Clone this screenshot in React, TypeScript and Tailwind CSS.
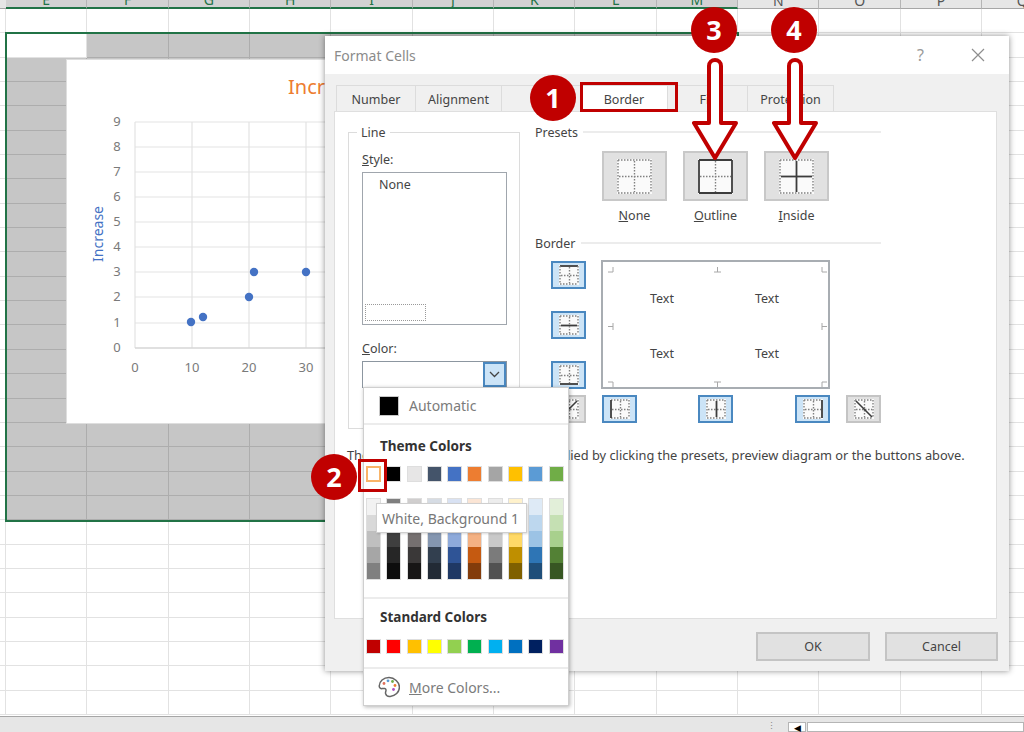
import { ReactNode } from 'react'

const COLUMNS = ['E', 'F', 'G', 'H', 'I', 'J', 'K', 'L', 'M', 'N', 'O', 'P', 'Q']
const ROW_COUNT = 29

const THEME_COLORS = [
  'bg-[#ffffff]', 'bg-[#000000]', 'bg-[#e7e6e6]', 'bg-[#44546a]', 'bg-[#4472c4]',
  'bg-[#ed7d31]', 'bg-[#a5a5a5]', 'bg-[#ffc000]', 'bg-[#5b9bd5]', 'bg-[#70ad47]',
]

const TINTS = [
  ['bg-[#f2f2f2]', 'bg-[#d9d9d9]', 'bg-[#bfbfbf]', 'bg-[#a6a6a6]', 'bg-[#808080]'],
  ['bg-[#7f7f7f]', 'bg-[#595959]', 'bg-[#3f3f3f]', 'bg-[#262626]', 'bg-[#0d0d0d]'],
  ['bg-[#d0cece]', 'bg-[#aeabab]', 'bg-[#757070]', 'bg-[#3a3838]', 'bg-[#171616]'],
  ['bg-[#d6dce4]', 'bg-[#adb9ca]', 'bg-[#8496b0]', 'bg-[#323f4f]', 'bg-[#222a35]'],
  ['bg-[#d9e2f3]', 'bg-[#b4c6e7]', 'bg-[#8eaadb]', 'bg-[#2f5496]', 'bg-[#1f3864]'],
  ['bg-[#fbe5d5]', 'bg-[#f7caac]', 'bg-[#f4b183]', 'bg-[#c55a11]', 'bg-[#833c0b]'],
  ['bg-[#ededed]', 'bg-[#dbdbdb]', 'bg-[#c9c9c9]', 'bg-[#7b7b7b]', 'bg-[#525252]'],
  ['bg-[#fff2cc]', 'bg-[#ffe599]', 'bg-[#ffd966]', 'bg-[#bf8f00]', 'bg-[#7f6000]'],
  ['bg-[#deeaf6]', 'bg-[#bdd7ee]', 'bg-[#9cc3e5]', 'bg-[#2e75b5]', 'bg-[#1f4e79]'],
  ['bg-[#e2efd9]', 'bg-[#c5e0b3]', 'bg-[#a8d08d]', 'bg-[#538135]', 'bg-[#375623]'],
]

const STANDARD_COLORS = [
  'bg-[#c00000]', 'bg-[#ff0000]', 'bg-[#ffc000]', 'bg-[#ffff00]', 'bg-[#92d050]',
  'bg-[#00b050]', 'bg-[#00b0f0]', 'bg-[#0070c0]', 'bg-[#002060]', 'bg-[#7030a0]',
]

type Side = 'top' | 'bottom' | 'left' | 'right' | 'h' | 'v' | 'diag' | 'anti'

// All the border buttons share one glyph: dotted box with the active sides drawn solid.
function BorderGlyph({ size, solid = [] }: { size: number; solid?: Side[] }) {
  const m = Math.floor(size / 2) + 0.5
  const segments: Record<string, [number, number, number, number]> = {
    top: [1, 1, size - 1, 1],
    bottom: [1, size - 1, size - 1, size - 1],
    left: [1, 1, 1, size - 1],
    right: [size - 1, 1, size - 1, size - 1],
    h: [2, m, size - 2, m],
    v: [m, 2, m, size - 2],
  }
  return (
    <svg width={size} height={size} viewBox={`0 0 ${size} ${size}`}>
      <rect x="0" y="0" width={size} height={size} fill="#fafafa" />
      {Object.entries(segments).map(([key, [x1, y1, x2, y2]]) => {
        const on = solid.includes(key as Side)
        return (
          <line
            key={key}
            x1={x1}
            y1={y1}
            x2={x2}
            y2={y2}
            stroke={on ? '#3c3c3c' : '#808080'}
            strokeWidth={on ? 1.8 : 1.4}
            strokeDasharray={on ? undefined : '1.5 1.5'}
          />
        )
      })}
      {solid.includes('diag') && <line x1="2" y1="2" x2={size - 2} y2={size - 2} stroke="#3c3c3c" strokeWidth="1.6" />}
      {solid.includes('anti') && <line x1="2" y1={size - 2} x2={size - 2} y2="2" stroke="#3c3c3c" strokeWidth="1.6" />}
    </svg>
  )
}

function SmallBorderButton({ solid, active = true }: { solid: Side[]; active?: boolean }) {
  return (
    <button
      className={`flex h-[28px] w-[35px] items-center justify-center border-2 ${
        active ? 'border-[#4a88c0] bg-[#cce4f7]' : 'border-[#c4c4c4] bg-[#e1e1e1]'
      }`}
    >
      <BorderGlyph size={20} solid={solid} />
    </button>
  )
}

function PresetButton({ solid, label, hotkey }: { solid: Side[]; label: string; hotkey: string }) {
  return (
    <div className="flex w-[65px] flex-col items-center">
      <button className="flex h-[50px] w-[65px] items-center justify-center border-2 border-[#c8c8c8] bg-[#e1e1e1]">
        <BorderGlyph size={35} solid={solid} />
      </button>
      <span className="mt-[6px] text-[12.5px] leading-[18px] text-[#444]">
        <span className="underline">{hotkey}</span>
        {label}
      </span>
    </div>
  )
}

function SectionHeading({ children }: { children: ReactNode }) {
  return (
    <div className="flex h-[18px] items-center gap-[5px] text-[12.5px] text-[#444]">
      <span>{children}</span>
      <span className="mt-[-2px] h-[2px] flex-1 bg-[#ececec]" />
    </div>
  )
}

function Tab({ label, width, active }: { label: string; width: string; active?: boolean }) {
  return (
    <div
      className={`flex h-[26px] items-center justify-center border-t border-r border-[#dcdcdc] pt-[3px] text-[12.5px] text-[#444] ${width} ${
        active ? 'bg-white' : ''
      }`}
    >
      {label}
    </div>
  )
}

function Sheet() {
  return (
    <div className="flex h-[716px] flex-col overflow-hidden">
      <div className="grid h-[9px] grid-cols-[6px_repeat(13,81.35px)] grid-rows-[9px] overflow-hidden">
        <div className="border-b border-[#a6a6a6] bg-[#e6e6e6]" />
        {COLUMNS.map((col, i) => (
          <div
            key={col}
            className={`flex items-end justify-center border-r border-[#b5b5b5] text-[14px] leading-none ${
              i < 9
                ? 'border-b-2 border-b-[#217346] bg-[#d2d2d2] text-[#217346]'
                : 'border-b border-b-[#a6a6a6] bg-[#e6e6e6] text-[#555]'
            }`}
          >
            {col}
          </div>
        ))}
      </div>
      <div className="grid grid-cols-[6px_repeat(13,81.35px)] auto-rows-[24.35px]">
        {Array.from({ length: ROW_COUNT }).flatMap((_, r) =>
          ['', ...COLUMNS].map((col, c) => {
            const selected = r >= 1 && r <= 20 && c >= 1 && c <= 9 && !(r === 1 && c === 1)
            return (
              <div
                key={`${r}-${col}`}
                className={
                  selected
                    ? 'border-r border-b border-[#adadad] bg-[#c6c6c6]'
                    : 'border-r border-b border-[#e2e2e2] bg-white'
                }
              />
            )
          }),
        )}
      </div>
    </div>
  )
}

function Chart() {
  const yLines = [122, 147, 172, 197, 222, 247, 272, 297, 323, 348]
  const xLines = [135, 192, 249, 306]
  const points = [[191, 322], [203, 317], [249, 297], [254, 272], [306, 272]]
  return (
    <div className="absolute top-[59px] left-[66px] h-[365px] w-[340px] border border-[#dedede] bg-white">
      <svg width="340" height="364" viewBox="67 60 340 364" className="font-['Noto_Sans',sans-serif]">
        {yLines.map((y) => (
          <line key={y} x1="135" y1={y} x2="407" y2={y} stroke="#e3e3e3" strokeWidth="1.2" />
        ))}
        {xLines.map((x) => (
          <line key={x} x1={x} y1="122" x2={x} y2="348" stroke="#e3e3e3" strokeWidth="1.2" />
        ))}
        <line x1="135" y1="348" x2="407" y2="348" stroke="#d0d0d0" strokeWidth="1.2" />
        {yLines.map((y, i) => (
          <text key={y} x="117" y={y + 4} fontSize="13" fill="#7a7a7a" textAnchor="middle">
            {9 - i}
          </text>
        ))}
        {xLines.map((x, i) => (
          <text key={x} x={x} y="372" fontSize="13" fill="#7a7a7a" textAnchor="middle">
            {i * 10}
          </text>
        ))}
        {points.map(([x, y]) => (
          <circle key={`${x}-${y}`} cx={x} cy={y} r="4.2" fill="#4472c4" />
        ))}
        <text x="288" y="94" fontSize="20" fill="#ed7d31">
          Increase
        </text>
        <text x="0" y="0" fontSize="14" fill="#4472c4" textAnchor="middle" transform="translate(103 234) rotate(-90)">
          Increase
        </text>
      </svg>
    </div>
  )
}

function PreviewTicks() {
  const ticks = [
    'M5 10h5V5', 'M111 10h7M114.5 5v5', 'M219 5v5h5',
    'M5 64.5h5M10 61v7', 'M219 61v7M219 64.5h5',
    'M5 120h5v5', 'M111 120h7M114.5 120v5', 'M224 120h-5v5',
  ]
  return (
    <svg className="absolute top-0 left-0" width="227" height="127" viewBox="0 0 227 127" fill="none" stroke="#a8a8a8">
      {ticks.map((d) => (
        <path key={d} d={d} />
      ))}
    </svg>
  )
}

function FormatCellsDialog() {
  return (
    <div className="absolute top-[36px] left-[325px] flex h-[635px] w-[684px] flex-col bg-[#f0f0f0] shadow-[0_0_6px_rgba(0,0,0,0.45)]">
      <div className="flex h-[38px] items-center justify-between bg-white pr-[24px] pl-[9px]">
        <span className="text-[14px] text-[#8b8b8b]">Format Cells</span>
        <div className="flex items-center gap-[47px]">
          <span className="text-[16px] text-[#9a9a9a]">?</span>
          <svg width="14" height="14" viewBox="0 0 14 14" stroke="#8e8e8e" strokeWidth="1.2">
            <path d="M1 1l12 12M13 1L1 13" />
          </svg>
        </div>
      </div>

      <div className="mt-[11px] ml-[11px] flex h-[26px]">
        <Tab label="Number" width="w-[80px] border-l" />
        <Tab label="Alignment" width="w-[86px]" />
        <Tab label="" width="w-[79px] border-r-0" />
        <Tab label="Border" width="w-[87px]" active />
        <Tab label="Fill" width="w-[80px]" />
        <Tab label="Protection" width="w-[86px]" />
      </div>

      <div className="mx-[9px] flex h-[508px] w-[663px] flex-col border border-[#dfdfdf] bg-white">
        <div className="flex">
          <div className="mt-[20px] ml-[13px] flex h-[297px] w-[172px] flex-col border border-[#dcdcdc] px-[13px]">
            <span className="mt-[-9px] ml-[-5px] w-fit bg-white px-[4px] text-[12.5px] leading-[18px] text-[#444]">Line</span>
            <span className="mt-[9px] text-[12.5px] leading-[18px] text-[#444]">
              <span className="underline">S</span>tyle:
            </span>
            <div className="relative mt-[3px] h-[153px] w-[145px] border border-[#a0a6ad] pt-[3px] pl-[16px] text-[12.5px] leading-[18px] text-[#444]">
              None
              <div className="absolute top-[131px] left-[2px] h-[17px] w-[61px] border border-dotted border-[#999]" />
            </div>
            <span className="mt-[15px] text-[12.5px] leading-[18px] text-[#444]">
              <span className="underline">C</span>olor:
            </span>
            <div className="mt-[3px] flex h-[27px] w-[145px] justify-end border border-[#8c96a0]">
              <div className="flex w-[23px] items-center justify-center border-2 border-[#4a88c0] bg-[#cce4f7]">
                <svg width="11" height="7" viewBox="0 0 11 7" fill="none" stroke="#444" strokeWidth="1.3">
                  <path d="M1 1l4.500 4.500L10 1" />
                </svg>
              </div>
            </div>
          </div>

          <div className="mt-[12px] ml-[15px] flex w-[346px] flex-col">
            <SectionHeading>Presets</SectionHeading>
            <div className="mt-[9px] ml-[67px] flex gap-[16px]">
              <PresetButton solid={[]} hotkey="N" label="one" />
              <PresetButton solid={['top', 'bottom', 'left', 'right']} hotkey="O" label="utline" />
              <PresetButton solid={['h', 'v']} hotkey="I" label="nside" />
            </div>
            <div className="mt-[10px]">
              <SectionHeading>Border</SectionHeading>
            </div>
            <div className="mt-[7px] flex">
              <div className="mt-[1px] ml-[16px] flex h-[128px] flex-col justify-between">
                <SmallBorderButton solid={['top']} />
                <SmallBorderButton solid={['h']} />
                <SmallBorderButton solid={['bottom']} />
              </div>
              <div className="relative ml-[15px] grid h-[129px] w-[229px] grid-cols-[118px_92px] grid-rows-[74px_36px] border-2 border-[#a8adb2] text-[12.5px] text-[#444]">
                <PreviewTicks />
                {[0, 1, 2, 3].map((i) => (
                  <span key={i} className="flex items-center justify-center">
                    Text
                  </span>
                ))}
              </div>
            </div>
            <div className="mt-[6px] ml-[16px] flex">
              <SmallBorderButton solid={['anti']} active={false} />
              <div className="ml-[16px]">
                <SmallBorderButton solid={['left']} />
              </div>
              <div className="ml-[61px]">
                <SmallBorderButton solid={['v']} />
              </div>
              <div className="ml-[62px]">
                <SmallBorderButton solid={['right']} />
              </div>
              <div className="ml-[16px]">
                <SmallBorderButton solid={['diag']} active={false} />
              </div>
            </div>
          </div>
        </div>
        <p className="mt-[17px] ml-[12px] text-[12.8px] leading-[18px] whitespace-nowrap text-[#444]">
          The selected border style can be applied by clicking the presets, preview diagram or the buttons above.
        </p>
      </div>

      <div className="mt-[13px] flex justify-end gap-[15px] pr-[11px]">
        <button className="h-[29px] w-[114px] border-2 border-[#c4c4c4] bg-[#e1e1e1] pt-[1px] text-[12.5px] text-[#444]">OK</button>
        <button className="h-[29px] w-[113px] border-2 border-[#c4c4c4] bg-[#e1e1e1] pt-[1px] text-[12.5px] text-[#444]">Cancel</button>
      </div>
    </div>
  )
}

function PaletteIcon() {
  return (
    <svg width="22" height="22" viewBox="0 0 22 22" fill="none">
      <path
        d="M11 1.500C5.500 1.500 1.200 5.200 1.200 10c0 2 1.600 3 3.200 2.600 1.800-.4 3.400-.4 3.600 1.200.2 1.500-.8 2.200-.4 3.800.5 2 2.400 3 4.600 2.800 5-.4 9.200-4.200 9.200-9.200S16.400 1.500 11 1.500z"
        stroke="#666"
        strokeWidth="1.5"
      />
      <circle cx="6" cy="7.500" r="1.400" fill="#e0705a" />
      <circle cx="10" cy="4.800" r="1.400" fill="#5b9bd5" />
      <circle cx="14.500" cy="5.500" r="1.400" fill="#70ad47" />
      <circle cx="17" cy="9.500" r="1.400" fill="#ed7d31" />
      <circle cx="15.500" cy="13.500" r="1.400" fill="#b04fc0" />
    </svg>
  )
}

function ColorPopup() {
  return (
    <div className="absolute top-[387px] left-[363px] flex h-[319px] w-[206px] flex-col border border-[#cfcfcf] bg-white shadow-[1px_1px_4px_rgba(0,0,0,0.3)]">
      <div className="flex h-[37px] items-center border-b-2 border-[#ececec] pl-[15px]">
        <div className="h-[20px] w-[20px] border border-[#c8c8c8] bg-black" />
        <span className="ml-[10px] text-[14px] text-[#7b7b7b]">Automatic</span>
      </div>
      <div className="mt-[11px] ml-[16px] text-[13.5px] leading-[20px] font-bold text-[#333]">Theme Colors</div>
      <div className="mt-[10px] ml-[2px] flex gap-[5.3px]">
        {THEME_COLORS.map((color, i) => (
          <div key={color} className={`h-[16px] w-[15px] border ${i === 0 ? 'border-2 border-[#f9b468]' : 'border-[#dedede]'} ${color}`} />
        ))}
      </div>
      <div className="mt-[16px] ml-[2px] flex gap-[5.3px]">
        {TINTS.map((column, i) => (
          <div key={i} className="flex w-[15px] flex-col border border-[#dedede]">
            {column.map((color) => (
              <div key={color} className={`h-[16px] ${color}`} />
            ))}
          </div>
        ))}
      </div>
      <div className="mt-[17px] h-[2px] bg-[#ececec]" />
      <div className="mt-[8px] ml-[16px] text-[13.5px] leading-[20px] font-bold text-[#333]">Standard Colors</div>
      <div className="mt-[12px] ml-[2px] flex gap-[5.3px]">
        {STANDARD_COLORS.map((color) => (
          <div key={color} className={`h-[15px] w-[15px] border border-[#dedede] ${color}`} />
        ))}
      </div>
      <div className="mt-[13px] h-[2px] bg-[#ececec]" />
      <div className="flex flex-1 items-center pl-[14px]">
        <PaletteIcon />
        <span className="ml-[9px] text-[14px] text-[#7b7b7b]">
          <span className="underline">M</span>ore Colors...
        </span>
      </div>
    </div>
  )
}

function StepBadge({ n, position }: { n: number; position: string }) {
  return (
    <div
      className={`absolute flex h-[46px] w-[46px] items-center justify-center rounded-full bg-[#c00000] text-[27px] font-bold text-white ${position}`}
    >
      {n}
    </div>
  )
}

function DownArrow({ position }: { position: string }) {
  return (
    <svg className={`absolute ${position}`} width="46" height="104" viewBox="0 0 46 104">
      <path
        d="M17 8a6 6 0 0 1 12 0V65H44L23 100 2 65H17Z"
        fill="white"
        stroke="#c00000"
        strokeWidth="4"
        strokeLinejoin="round"
      />
    </svg>
  )
}

export default function App() {
  return (
    <div className="relative h-[732px] w-[1024px] overflow-hidden bg-white font-['Noto_Sans',sans-serif]">
      <Sheet />

      <div className="flex h-[16px] justify-end border-t border-[#a6a6a6] bg-[#e6e6e6] pt-[5px]">
        <span className="mt-[-1px] mr-[12px] text-[9px] leading-[10px] text-[#888]">⋮</span>
        <div className="flex w-[18px] items-center justify-center border border-[#b5b5b5] bg-white text-[9px] leading-none text-black">
          ◀
        </div>
        <div className="ml-[1px] w-[217px] border border-[#b5b5b5] bg-white" />
      </div>

      {/* selection frame around the charted range */}
      <div className="absolute top-[32px] left-[5px] h-[490px] w-[734px] border-2 border-[#217346]" />
      <Chart />
      <FormatCellsDialog />
      <ColorPopup />

      <div className="absolute top-[503px] left-[376px] flex h-[30px] w-[151px] items-center border border-[#cfcfcf] bg-white pl-[5px] text-[14px] text-[#777] shadow-[1px_1px_2px_rgba(0,0,0,0.15)]">
        White, Background 1
      </div>

      {/* tutorial callouts */}
      <div className="absolute top-[82px] left-[580px] h-[30px] w-[98px] border-[3px] border-[#c00000]" />
      <div className="absolute top-[459px] left-[358px] h-[33px] w-[29px] border-[3px] border-[#c00000]" />
      <StepBadge n={1} position="top-[75px] left-[530px]" />
      <StepBadge n={2} position="top-[454px] left-[311px]" />
      <StepBadge n={3} position="top-[7px] left-[691px]" />
      <StepBadge n={4} position="top-[7px] left-[771px]" />
      <DownArrow position="top-[58px] left-[692px]" />
      <DownArrow position="top-[58px] left-[772px]" />
    </div>
  )
}
